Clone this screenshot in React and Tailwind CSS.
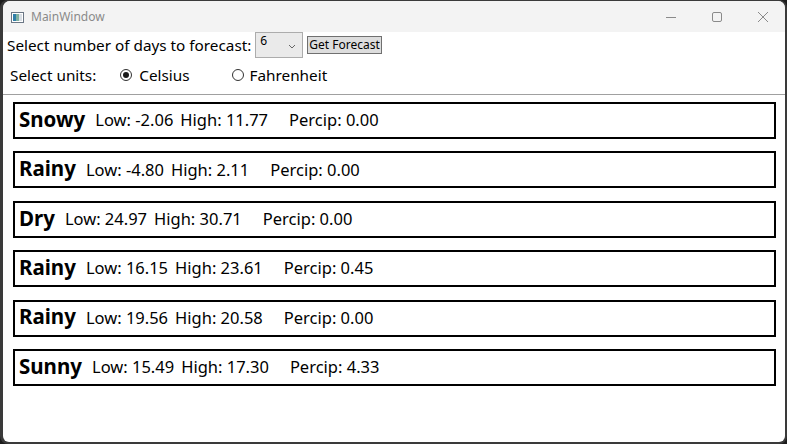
import React from "react";

const rows = [
  { w: "Snowy", low: "-2.06", high: "11.77", p: "0.00" },
  { w: "Rainy", low: "-4.80", high: "2.11", p: "0.00" },
  { w: "Dry", low: "24.97", high: "30.71", p: "0.00" },
  { w: "Rainy", low: "16.15", high: "23.61", p: "0.45" },
  { w: "Rainy", low: "19.56", high: "20.58", p: "0.00" },
  { w: "Sunny", low: "15.49", high: "17.30", p: "4.33" },
];

function Radio({ checked }) {
  return (
    <span className="w-[12px] h-[12px] rounded-full border border-[#333] bg-white flex items-center justify-center">
      {checked && <span className="w-[6px] h-[6px] rounded-full bg-[#1a1a1a]" />}
    </span>
  );
}

export default function App() {
  return (
    <div
      className="w-[787px] h-[444px] bg-[#1c1c1c] overflow-hidden"
      style={{ fontFamily: '"Segoe UI", "Noto Sans", "Open Sans", sans-serif' }}
    >
      <div className="w-full h-full rounded-[8px] bg-[#3a3a3a] pt-[1px] px-[2px] pb-[2px] flex flex-col">
        <div className="flex-1 flex flex-col rounded-t-[7px] rounded-b-[6px] overflow-hidden bg-white ml-[1px]">
          {/* title bar */}
          <div className="h-[31px] bg-[#f3f3f3] flex items-center shrink-0">
            <svg width="13" height="11" viewBox="0 0 13 11" className="ml-[8px] mt-[1px]">
              <rect x="0.5" y="0.5" width="12" height="10" fill="#fff" stroke="#6b7785" />
              <rect x="2" y="2" width="3" height="7" fill="#2f7ea8" />
              <rect x="5" y="2" width="3" height="7" fill="#7fb0a0" />
              <rect x="8" y="2" width="3" height="7" fill="#d9dfe5" />
            </svg>
            <span className="ml-[7px] text-[12px] text-[#8a8a8a]">MainWindow</span>
            <div className="flex-1" />
            <svg width="12" height="12" viewBox="0 0 12 12" className="mr-[34px]">
              <line x1="1" y1="6.5" x2="11" y2="6.5" stroke="#8a8a8a" strokeWidth="1" />
            </svg>
            <svg width="12" height="12" viewBox="0 0 12 12" className="mr-[34px]">
              <rect x="1.5" y="1.5" width="9" height="9" rx="1.5" fill="none" stroke="#8a8a8a" strokeWidth="1" />
            </svg>
            <svg width="12" height="12" viewBox="0 0 12 12" className="mr-[16px]">
              <path d="M1 1 L11 11 M11 1 L1 11" stroke="#8a8a8a" strokeWidth="1" />
            </svg>
          </div>
          {/* controls */}
          <div className="h-[26px] flex items-center text-[15.3px] text-black shrink-0">
            <span className="ml-[4px]">Select number of days to forecast:</span>
            <div className="ml-[4px] w-[48px] h-[26px] border border-[#acacac] bg-[#eaeaea] flex items-start relative">
              <span className="text-[12px] ml-[4px] mt-[1px] leading-[14px]">6</span>
              <svg width="8" height="5" viewBox="0 0 8 5" className="absolute right-[6px] top-[11px]">
                <path d="M1 1 L4 4 L7 1" fill="none" stroke="#666" strokeWidth="1" />
              </svg>
            </div>
            <div className="ml-[4px] h-[18px] px-[1px] border border-[#707070] bg-[#dddddd] text-[12px] leading-[16px] flex items-center">
              Get Forecast
            </div>
          </div>
          <div className="h-[34px] flex items-center text-[15.3px] text-black shrink-0">
            <span className="ml-[7px]">Select units:</span>
            <div className="ml-[24px] flex items-center gap-[7px]">
              <Radio checked />
              <span>Celsius</span>
            </div>
            <div className="ml-[42px] flex items-center gap-[6px]">
              <Radio />
              <span>Fahrenheit</span>
            </div>
          </div>
          <div className="h-[1px] mt-[2px] bg-[#a0a0a0] shrink-0" />
          {/* list */}
          <div className="flex flex-col gap-[12.4px] pt-[7px] pl-[10px] pr-[9px]">
            {rows.map((r, i) => (
              <div
                key={i}
                className="h-[37px] border-2 border-black flex items-center pl-[4px] text-black"
              >
                <span className="text-[20.5px] font-bold mr-[10px] leading-none -mt-[3px]">{r.w}</span>
                <span className="text-[16.5px] mr-[7px] leading-none">Low: {r.low}</span>
                <span className="text-[16.5px] mr-[21px] leading-none">High: {r.high}</span>
                <span className="text-[16.5px] leading-none">Percip: {r.p}</span>
              </div>
            ))}
          </div>
        </div>
      </div>
    </div>
  );
}
